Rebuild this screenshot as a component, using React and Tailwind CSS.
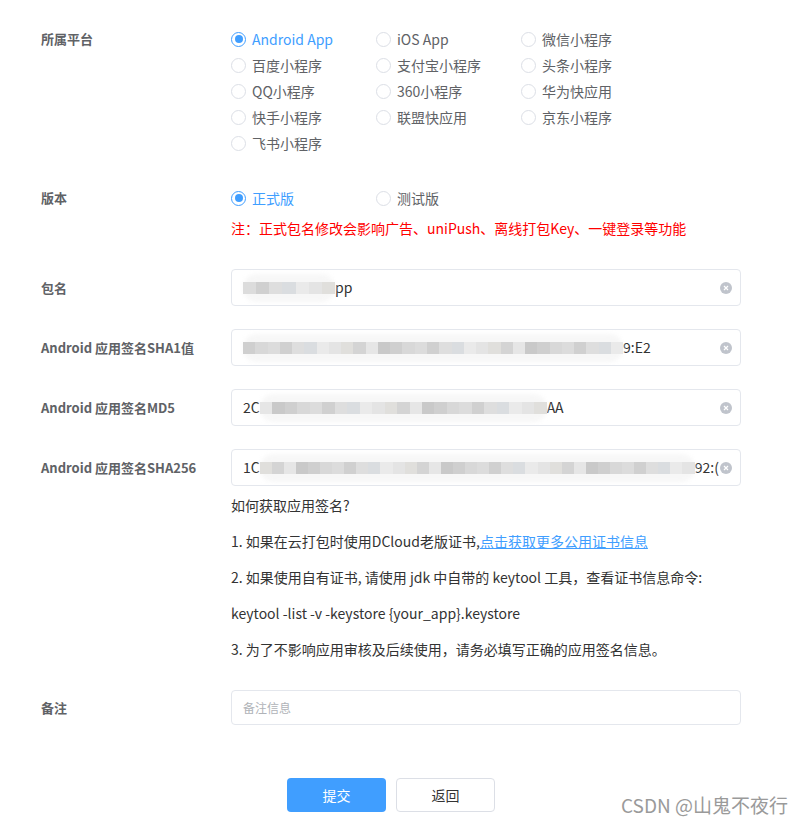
import React from "react";

const font = { fontFamily: '"Microsoft YaHei", "Noto Sans CJK SC", "Noto Sans", sans-serif' };

function Radio({ label, checked }) {
  return (
    <div className="flex items-center h-[26px]">
      <span
        className={
          "w-[15px] h-[15px] rounded-full border flex items-center justify-center shrink-0 " +
          (checked ? "border-[#409eff]" : "border-[#dcdfe6]")
        }
      >
        {checked && <span className="w-[8px] h-[8px] rounded-full bg-[#409eff]" />}
      </span>
      <span className={"ml-[6px] text-[14px] " + (checked ? "text-[#409eff]" : "text-[#606266]")}>{label}</span>
    </div>
  );
}

function Label({ children }) {
  return <div className="w-[190px] shrink-0 text-[13px] font-bold text-[#606266]">{children}</div>;
}

function Blur({ width, seed = 0 }) {
  const cols = ["#d4d4d4", "#dcdcdc", "#e4e4e4", "#cfcfcf", "#dadde0", "#e6e6e6", "#d0d0d0", "#e0dfdc", "#d8d8d8", "#eaeaea", "#c9c9c9", "#dedede"];
  const n = Math.floor(width / 12);
  const cells = [];
  for (let i = 0; i < n; i++) cells.push(cols[(i * 5 + seed) % cols.length]);
  return (
    <span className="relative inline-flex items-center h-[20px]" style={{ width }}>
      <span className="absolute inset-x-0 top-[-4px] bottom-[-4px] rounded-full bg-[#f7f7f7] blur-[2px]" />
      <span className="relative flex h-[12px] w-full">
        {cells.map((c, i) => (
          <span key={i} className="flex-1 h-full" style={{ background: c }} />
        ))}
      </span>
    </span>
  );
}

function ClearIcon() {
  return (
    <span className="absolute right-[8px] top-1/2 -translate-y-1/2 w-[12px] h-[12px] rounded-full bg-[#c0c4cc] flex items-center justify-center">
      <svg width="6" height="6" viewBox="0 0 6 6">
        <path d="M1 1L5 5M5 1L1 5" stroke="#fff" strokeWidth="1.2" />
      </svg>
    </span>
  );
}

function Field({ label, children, mt }) {
  return (
    <div className={"flex items-center " + mt}>
      <Label>{label}</Label>
      <div className="relative w-[510px] h-[37px] border border-[#e4e7ed] rounded-[4px] flex items-center pl-[11px] text-[14px] text-[#333] overflow-hidden">
        {children}
        <ClearIcon />
      </div>
    </div>
  );
}

export default function App() {
  const platforms = [
    ["Android App", true], ["iOS App"], ["微信小程序"],
    ["百度小程序"], ["支付宝小程序"], ["头条小程序"],
    ["QQ小程序"], ["360小程序"], ["华为快应用"],
    ["快手小程序"], ["联盟快应用"], ["京东小程序"],
    ["飞书小程序"],
  ];
  return (
    <div className="w-[808px] h-[824px] bg-white relative pl-[41px] pt-[26px]" style={font}>
      {/* 所属平台 */}
      <div className="flex items-start">
        <div className="h-[26px] flex items-center"><Label>所属平台</Label></div>
        <div className="grid grid-cols-[145px_145px_145px]">
          {platforms.map(([l, c]) => (
            <Radio key={l} label={l} checked={!!c} />
          ))}
        </div>
      </div>

      {/* 版本 */}
      <div className="flex items-center mt-[29px]">
        <Label>版本</Label>
        <div className="grid grid-cols-[145px_145px]">
          <Radio label="正式版" checked />
          <Radio label="测试版" />
        </div>
      </div>
      <div className="ml-[190px] mt-[10px] text-[14px] text-[#ff0000] h-[14px] leading-[14px]">
        注：正式包名修改会影响广告、uniPush、离线打包Key、一键登录等功能
      </div>

      <Field label="包名" mt="mt-[34px]">
        <Blur width={92} seed={1} />
        <span>pp</span>
      </Field>
      <Field label="Android 应用签名SHA1值" mt="mt-[23px]">
        <Blur width={380} seed={3} />
        <span>9:E2</span>
      </Field>
      <Field label="Android 应用签名MD5" mt="mt-[23px]">
        <span>2C</span>
        <Blur width={287} seed={5} />
        <span>AA</span>
      </Field>
      <Field label="Android 应用签名SHA256" mt="mt-[23px]">
        <span>1C</span>
        <Blur width={435} seed={7} />
        <span>92:(</span>
      </Field>

      <div className="ml-[190px] text-[14px] text-[#333] mt-[9px] flex flex-col gap-[16px] leading-[20px]">
        <div>如何获取应用签名?</div>
        <div>
          1. 如果在云打包时使用DCloud老版证书,
          <span className="text-[#409eff] underline">点击获取更多公用证书信息</span>
        </div>
        <div>2. 如果使用自有证书, 请使用 jdk 中自带的 keytool 工具，查看证书信息命令:</div>
        <div>keytool -list -v -keystore {"{your_app}"}.keystore</div>
        <div>3. 为了不影响应用审核及后续使用，请务必填写正确的应用签名信息。</div>
      </div>

      <div className="flex items-center mt-[31px]">
        <Label>备注</Label>
        <div className="w-[510px] h-[35px] border border-[#e4e7ed] rounded-[4px] flex items-center pl-[11px] text-[12px] text-[#b0b3b8]">
          备注信息
        </div>
      </div>

      <div className="flex ml-[246px] mt-[53px] gap-[10px]">
        <button className="w-[99px] h-[34px] rounded-[4px] bg-[#409eff] text-white text-[14px]">提交</button>
        <button className="w-[99px] h-[34px] rounded-[4px] border border-[#dcdfe6] bg-white text-[#333] text-[14px]">返回</button>
      </div>

      <div className="absolute left-[621px] top-[792px] text-[19px] leading-[26px] text-[#9a9a9a]" style={{ fontFamily: '"Noto Sans CJK SC", sans-serif' }}>
        CSDN @山鬼不夜行
      </div>
    </div>
  );
}
